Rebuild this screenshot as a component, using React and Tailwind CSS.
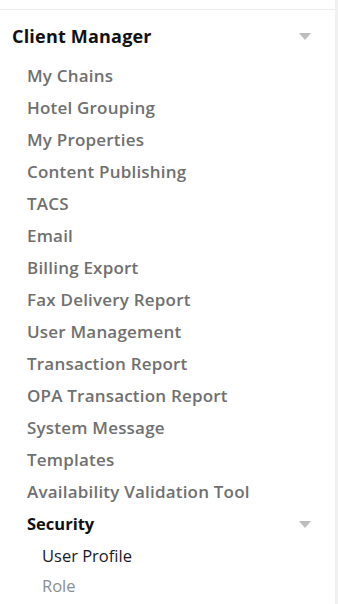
function Caret() {
  return (
    <svg width="12" height="7" viewBox="0 0 12 7" className="mr-[24px]">
      <path d="M0 0 L12 0 L6 7 Z" fill="#bdbdbd" />
    </svg>
  )
}

export default function App() {
  const items = [
    "My Chains",
    "Hotel Grouping",
    "My Properties",
    "Content Publishing",
    "TACS",
    "Email",
    "Billing Export",
    "Fax Delivery Report",
    "User Management",
    "Transaction Report",
    "OPA Transaction Report",
    "System Message",
    "Templates",
    "Availability Validation Tool",
  ]

  return (
    <div
      className="w-[338px] h-[604px] bg-white flex overflow-hidden"
      style={{ fontFamily: '"Open Sans", "Noto Sans", sans-serif' }}
    >
      <div className="flex-1 pt-[9px]">
        <div className="border-t border-[#ececec]">
          <div className="flex items-center justify-between pl-[12px] h-[50px] pt-[2px]">
            <span className="text-[18px] font-bold text-[#111] tracking-[0.2px]">Client Manager</span>
            <Caret />
          </div>
          <ul className="pl-[27px]">
            {items.map((item) => (
              <li
                key={item}
                className="h-[32px] flex items-center text-[17px] font-semibold text-[#707070] tracking-[0.2px]"
              >
                {item}
              </li>
            ))}
          </ul>
          <div className="flex items-center justify-between pl-[27px] h-[32px]">
            <span className="text-[16.5px] font-bold text-[#111]">Security</span>
            <Caret />
          </div>
          <ul className="pl-[42px]">
            <li className="h-[32px] flex items-center text-[16.5px] text-[#1a1a24]">User Profile</li>
            <li className="h-[28px] flex items-center text-[16.5px] text-[#8b8e94]">Role</li>
          </ul>
        </div>
      </div>
      <div className="w-[3px] bg-[#f1f1f1]" />
    </div>
  )
}
